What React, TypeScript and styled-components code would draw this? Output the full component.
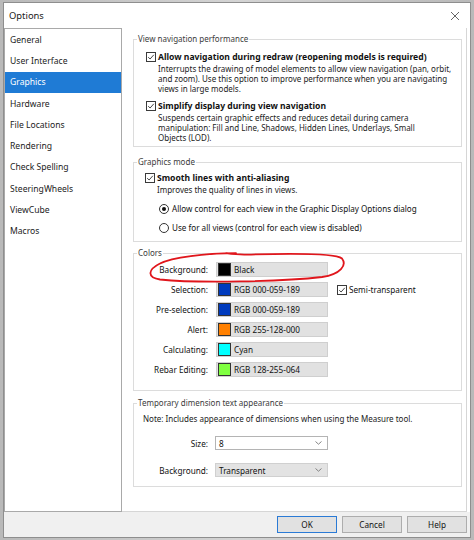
import React from "react";
import styled, { createGlobalStyle } from "styled-components";

const FONT = `"Noto Sans", "Open Sans", Arial, sans-serif`;

const GlobalStyle = createGlobalStyle`
  html, body { margin: 0; padding: 0; }
  body { background: #c4c4c4; font-family: ${FONT}; color: #000; }
  * { box-sizing: border-box; }
`;

const Frame = styled.div`
  position: relative;
  width: 474px;
  height: 540px;
  padding: 2px 3px 2px 3px;
  background: linear-gradient(90deg, #b9b9b9, #d4d4d4 50%, #b9b9b9);
`;

const Dialog = styled.div`
  display: flex;
  flex-direction: column;
  width: 468px;
  height: 536px;
  background: #f0f0f0;
  border: 1px solid #8e8e8e;
`;

const TitleBar = styled.div`
  height: 25px;
  flex: none;
  display: flex;
  align-items: center;
  justify-content: space-between;
  padding: 0 10px 0 5px;
  background: #fff;
  font-size: 9.4px;
  color: #1a1a1a;
`;

const Body = styled.div`
  flex: 1;
  display: flex;
  padding-right: 3px;
  background: #fff;
  min-height: 0;
`;

const Nav = styled.ul`
  list-style: none;
  margin: 0;
  padding: 0;
  width: 118px;
  flex: none;
  border: 1px solid #a9a9a9;
  background: #fff;
`;

const NavItem = styled.li<{ $active?: boolean }>`
  height: 21.3px;
  display: flex;
  align-items: center;
  padding-left: 5px;
  font-size: 8.6px;
  color: ${(p) => (p.$active ? "#fff" : "#222")};
  background: ${(p) => (p.$active ? "#1f7bd5" : "transparent")};
`;

const Content = styled.div`
  flex: 1;
  display: flex;
  flex-direction: column;
  padding: 6px 4px 0 11px;
  background: #fff;
  border-right: 1px solid #d6d6d6;
  border-bottom: 1px solid #d6d6d6;
`;

const Group = styled.fieldset<{ $mt?: number; $pb?: number }>`
  margin: ${(p) => p.$mt ?? 0}px 0 0 0;
  padding: 0 3px ${(p) => p.$pb ?? 4}px 3px;
  border: 1px solid #dcdcdc;
  min-width: 0;
`;

const Legend = styled.legend`
  padding: 0 1px;
  font-size: 8px;
  line-height: 10px;
  color: #3b3b3b;
`;

const Inner = styled.div<{ $pt: number; $pl: number }>`
  padding-top: ${(p) => p.$pt}px;
  padding-left: ${(p) => p.$pl}px;
`;

const OptionHead = styled.div<{ $mt?: number }>`
  display: flex;
  align-items: center;
  gap: 2px;
  height: 12px;
  margin-top: ${(p) => p.$mt ?? 0}px;
  font-size: 8.6px;
  font-weight: 700;
  color: #111;
`;

const Desc = styled.div`
  margin-top: 1px;
  padding-left: 12px;
  font-size: 8px;
  line-height: 10px;
  color: #222;
  white-space: nowrap;
`;

const Box = styled.span`
  width: 10px;
  height: 10px;
  flex: none;
  border: 1px solid #3a3a3a;
  background: #fff;
  display: inline-flex;
  align-items: center;
  justify-content: center;
`;

const RadioList = styled.div`
  margin-top: 4px;
  padding-left: 14px;
`;

const RadioRow = styled.div`
  display: flex;
  align-items: center;
  gap: 3px;
  height: 19px;
  font-size: 8.1px;
  color: #111;
`;

const Circle = styled.span<{ $on?: boolean }>`
  width: 10px;
  height: 10px;
  flex: none;
  border-radius: 50%;
  border: 1px solid #333;
  display: inline-flex;
  align-items: center;
  justify-content: center;
  &::after {
    content: "";
    width: 4px;
    height: 4px;
    border-radius: 50%;
    background: ${(p) => (p.$on ? "#111" : "transparent")};
  }
`;

const FormGrid = styled.div<{ $rowGap: number }>`
  display: grid;
  grid-template-columns: 71px 112px auto;
  column-gap: 8px;
  row-gap: ${(p) => p.$rowGap}px;
  align-items: center;
`;

const Label = styled.span`
  text-align: right;
  font-size: 8.2px;
  color: #111;
  white-space: nowrap;
`;

const ColorField = styled.div`
  height: 15px;
  display: flex;
  align-items: center;
  gap: 3px;
  padding-left: 1px;
  background: #e1e1e1;
  border: 1px solid #cfcfcf;
  font-size: 8.2px;
  color: #111;
`;

const Swatch = styled.span<{ $c: string }>`
  width: 13px;
  height: 13px;
  flex: none;
  background: ${(p) => p.$c};
  border: 1px solid #333;
`;

const CheckInline = styled.label`
  display: flex;
  align-items: center;
  gap: 2px;
  margin-left: 1px;
  font-size: 8.2px;
  color: #111;
`;

const Note = styled.div`
  font-size: 8px;
  line-height: 10px;
  color: #222;
  margin-bottom: 12px;
`;

const Select = styled.div<{ $gray?: boolean }>`
  height: 14px;
  display: flex;
  align-items: center;
  justify-content: space-between;
  padding: 0 5px 0 3px;
  font-size: 8.2px;
  color: #111;
  background: ${(p) => (p.$gray ? "#e3e3e3" : "#fff")};
  border: 1px solid ${(p) => (p.$gray ? "#d0d0d0" : "#b4b4b4")};
  margin-left: -1px;
`;

const BottomBar = styled.div`
  height: 25px;
  flex: none;
  display: flex;
  align-items: center;
  justify-content: flex-end;
  gap: 5px;
  padding-right: 3px;
  background: #f0f0f0;
`;

const Button = styled.button<{ $primary?: boolean }>`
  width: 60px;
  height: 17px;
  padding: 0;
  font-family: ${FONT};
  font-size: 8.2px;
  color: #111;
  background: #e1e1e1;
  border: 1px solid ${(p) => (p.$primary ? "#2a7ad5" : "#adadad")};
`;

const Overlay = styled.svg`
  position: absolute;
  left: 0;
  top: 0;
  pointer-events: none;
`;

const Check = () => (
  <Box>
    <svg width="8" height="8" viewBox="0 0 8 8">
      <polyline points="1.2,4.2 3.1,6 6.8,1.8" fill="none" stroke="#333" strokeWidth="0.9" />
    </svg>
  </Box>
);

const Chevron = () => (
  <svg width="7" height="4" viewBox="0 0 7 4">
    <polyline points="0.5,0.5 3.5,3.2 6.5,0.5" fill="none" stroke="#777" strokeWidth="0.9" />
  </svg>
);

const navItems = [
  "General",
  "User Interface",
  "Graphics",
  "Hardware",
  "File Locations",
  "Rendering",
  "Check Spelling",
  "SteeringWheels",
  "ViewCube",
  "Macros",
];

const colors = [
  { label: "Background:", c: "#000000", text: "Black" },
  { label: "Selection:", c: "#003bbd", text: "RGB 000-059-189", semi: true },
  { label: "Pre-selection:", c: "#003bbd", text: "RGB 000-059-189" },
  { label: "Alert:", c: "#ff8000", text: "RGB 255-128-000" },
  { label: "Calculating:", c: "#00ffff", text: "Cyan" },
  { label: "Rebar Editing:", c: "#80ff40", text: "RGB 128-255-064" },
];

export default function App() {
  return (
    <>
      <GlobalStyle />
      <Frame>
        <Dialog>
          <TitleBar>
            <span>Options</span>
            <svg width="10" height="10" viewBox="0 0 10 10">
              <path d="M1 1 L9 9 M9 1 L1 9" stroke="#555" strokeWidth="0.9" />
            </svg>
          </TitleBar>
          <Body>
            <Nav>
              {navItems.map((n) => (
                <NavItem key={n} $active={n === "Graphics"}>
                  {n}
                </NavItem>
              ))}
            </Nav>
            <Content>
              <Group $pb={3}>
                <Legend>View navigation performance</Legend>
                <Inner $pt={7} $pl={9}>
                  <OptionHead>
                    <Check />
                    Allow navigation during redraw (reopening models is required)
                  </OptionHead>
                  <Desc>
                    Interrupts the drawing of model elements to allow view navigation (pan, orbit,
                    <br />
                    and zoom). Use this option to improve performance when you are navigating
                    <br />
                    views in large models.
                  </Desc>
                  <OptionHead $mt={6}>
                    <Check />
                    Simplify display during view navigation
                  </OptionHead>
                  <Desc>
                    Suspends certain graphic effects and reduces detail during camera
                    <br />
                    manipulation: Fill and Line, Shadows, Hidden Lines, Underlays, Small
                    <br />
                    Objects (LOD).
                  </Desc>
                </Inner>
              </Group>

              <Group $mt={10} $pb={4}>
                <Legend>Graphics mode</Legend>
                <Inner $pt={5} $pl={8}>
                  <OptionHead>
                    <Check />
                    Smooth lines with anti-aliasing
                  </OptionHead>
                  <Desc>Improves the quality of lines in views.</Desc>
                  <RadioList>
                    <RadioRow>
                      <Circle $on />
                      Allow control for each view in the Graphic Display Options dialog
                    </RadioRow>
                    <RadioRow>
                      <Circle />
                      Use for all views (control for each view is disabled)
                    </RadioRow>
                  </RadioList>
                </Inner>
              </Group>

              <Group $mt={6} $pb={13}>
                <Legend>Colors</Legend>
                <Inner $pt={4} $pl={0}>
                  <FormGrid $rowGap={5}>
                    {colors.map((r) => (
                      <React.Fragment key={r.label}>
                        <Label>{r.label}</Label>
                        <ColorField>
                          <Swatch $c={r.c} />
                          {r.text}
                        </ColorField>
                        {r.semi ? (
                          <CheckInline>
                            <Check />
                            Semi-transparent
                          </CheckInline>
                        ) : (
                          <span />
                        )}
                      </React.Fragment>
                    ))}
                  </FormGrid>
                </Inner>
              </Group>

              <Group $mt={7} $pb={9}>
                <Legend>Temporary dimension text appearance</Legend>
                <Inner $pt={6} $pl={6}>
                  <Note>Note: Includes appearance of dimensions when using the Measure tool.</Note>
                </Inner>
                <FormGrid $rowGap={13}>
                  <Label>Size:</Label>
                  <Select>
                    <span>8</span>
                    <Chevron />
                  </Select>
                  <span />
                  <Label>Background:</Label>
                  <Select $gray>
                    <span>Transparent</span>
                    <Chevron />
                  </Select>
                  <span />
                </FormGrid>
              </Group>
            </Content>
          </Body>
          <BottomBar>
            <Button $primary>OK</Button>
            <Button>Cancel</Button>
            <Button>Help</Button>
          </BottomBar>
        </Dialog>
        <Overlay width="474" height="540" viewBox="0 0 474 540">
          <path
            d="M236 253.2 C205 253.5 172 257 160 263.5 C147 270 147.5 277.5 160 279.5 C198 283.5 282 281.5 322 277 C341 274 347 265 342 258.5 C337 254 300 253 246 254.6 C238 254.8 232 254 226 253.2"
            fill="none"
            stroke="#e0161c"
            strokeWidth="1.8"
            strokeLinecap="round"
          />
        </Overlay>
      </Frame>
    </>
  );
}
